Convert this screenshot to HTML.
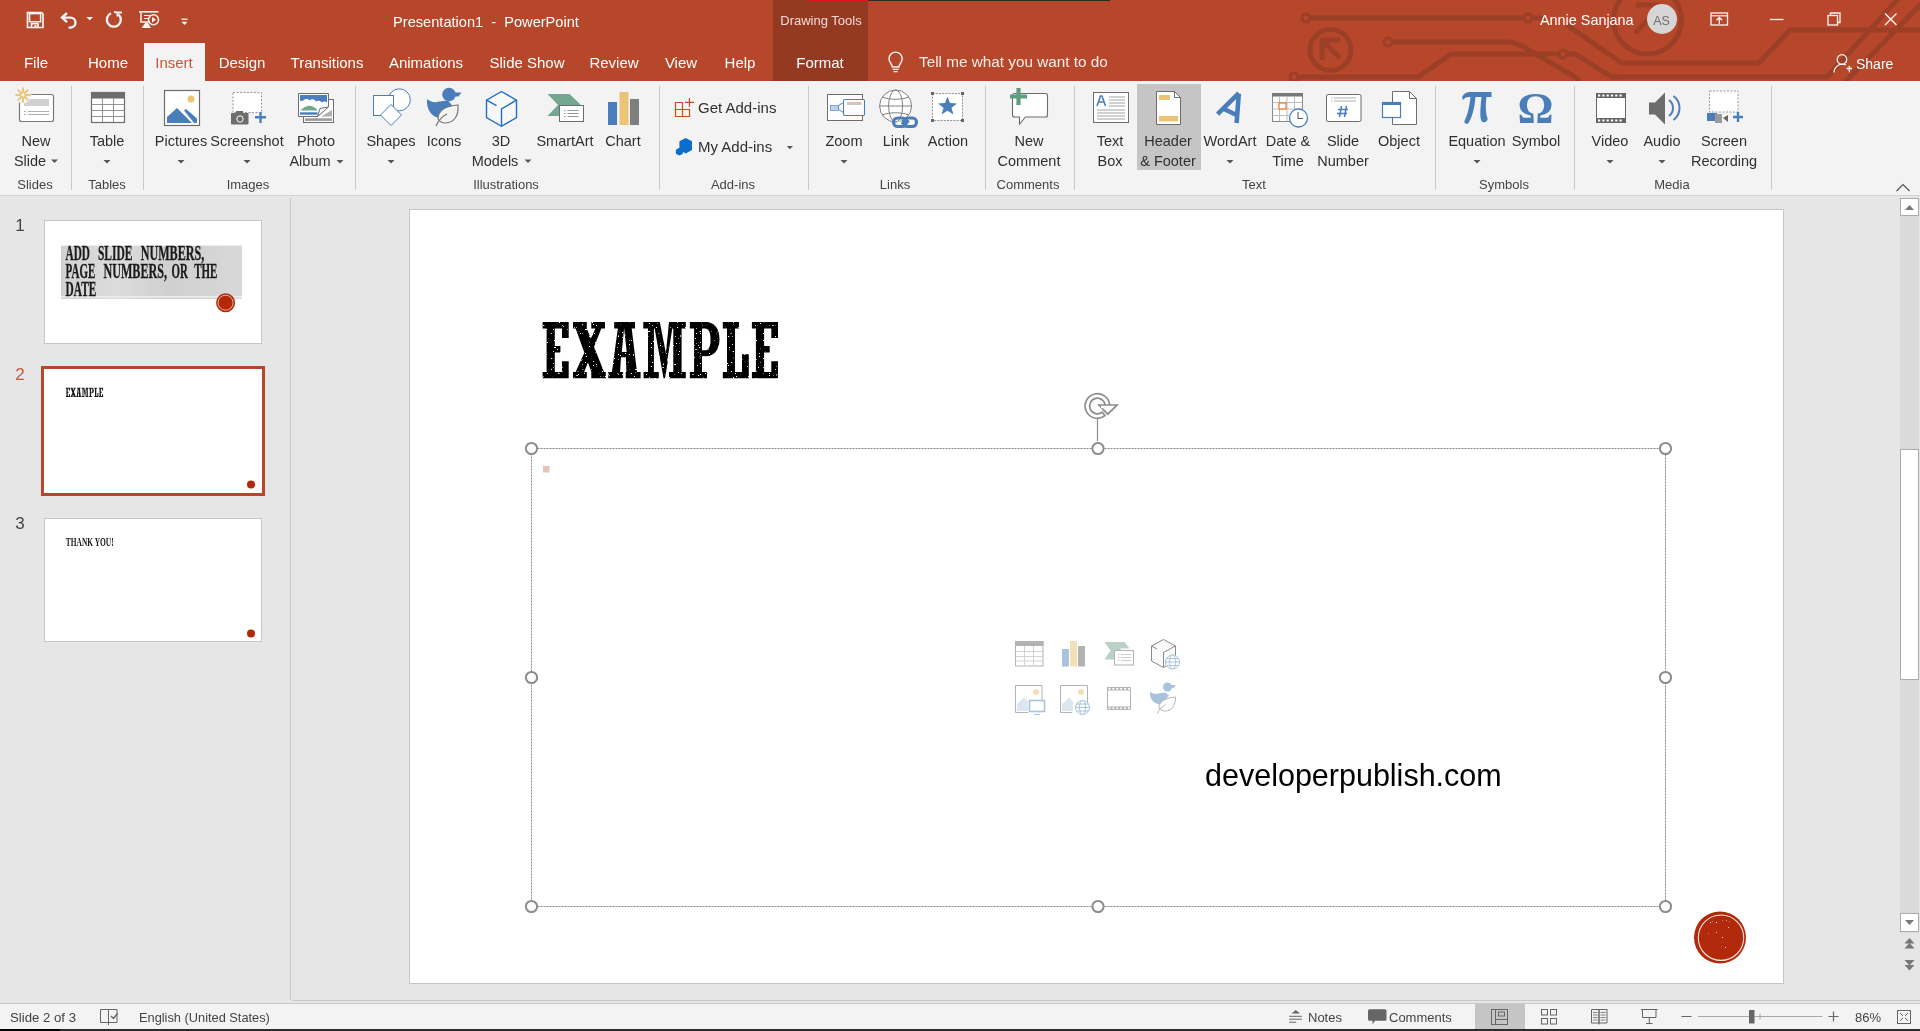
<!DOCTYPE html><html><head><meta charset="utf-8"><style>
*{margin:0;padding:0;box-sizing:border-box}
html,body{width:1920px;height:1031px;overflow:hidden;background:#E6E6E6;font-family:"Liberation Sans",sans-serif;position:relative}
.a{position:absolute;white-space:nowrap}
.c{position:absolute;white-space:nowrap;text-align:center;width:200px}
.tab{color:#fff;font-size:15px;line-height:18px}
.lbl{font-size:14.5px;color:#303030;line-height:20px}
.glbl{font-size:13px;color:#444;line-height:16px}
.st{font-size:13px;color:#444;line-height:16px}
svg{position:absolute;left:0;top:0}
</style></head><body><div style="position:absolute;left:0;top:0;width:1920px;height:1031px;overflow:hidden;will-change:transform">
<div class="a" style="left:0;top:0;width:1920px;height:81px;background:#B7472A"></div>
<svg width="1920" height="81" style="left:0;top:0"><g fill="none" stroke="#9C3F27" stroke-width="5" stroke-linejoin="round">
<path d="M1311 18H1523M1533 18H1545"/>
<circle cx="1306" cy="18" r="4" stroke-width="3.2"/><circle cx="1528" cy="18" r="4" stroke-width="3.2"/>
<circle cx="1330.5" cy="50" r="20.5"/>
<path d="M1322 60v-20h18M1322 40l18 18" stroke-width="5"/>
<path d="M1393 42H1511L1522 46L1575 77L1580 81"/>
<circle cx="1388" cy="42" r="4" stroke-width="3.2"/>
<path d="M1299 77H1418L1451 54H1558M1568 54H1575L1582 58L1605 73L1612 77L1620 77"/>
<circle cx="1294" cy="77" r="4" stroke-width="3.2"/><circle cx="1563" cy="54" r="4" stroke-width="3.2"/>
<path d="M1567 25L1600 48L1622 63H1759L1790 30H1920"/>
<path d="M1612 77H1827L1899 -2"/>
<path d="M1845 82L1922 3"/>
<circle cx="1647.5" cy="20" r="34"/>
<path d="M1635 33L1655 13M1636 5H1658V25"/>
</g></svg>
<div class="a" style="left:773px;top:0;width:95px;height:81px;background:#953A22"></div>
<div class="a" style="left:809px;top:0;width:59px;height:1px;background:#E81123"></div>
<div class="a" style="left:868px;top:0;width:242px;height:1px;background:#2B2B2B"></div>
<div class="a" style="left:144px;top:43px;width:61px;height:38px;background:#F3F3F3"></div>
<div class="a" style="left:0;top:81px;width:1920px;height:114px;background:#F3F3F3"></div>
<div class="a" style="left:0;top:195px;width:1920px;height:1px;background:#D4D4D4"></div>
<div class="a" style="left:1137px;top:84px;width:64px;height:86px;background:#C5C5C5"></div>
<div class="c tab" style="left:386px;top:13px;font-size:14.6px">Presentation1&nbsp; - &nbsp;PowerPoint</div>
<div class="c tab" style="left:721px;top:12px;font-size:13px;color:#F2D9D2">Drawing Tools</div>
<div class="a tab" style="left:1540px;top:11px;font-size:14.4px">Annie Sanjana</div>
<div class="a tab" style="left:919px;top:53px;font-size:15.3px;color:#F8EEEA">Tell me what you want to do</div>
<div class="a tab" style="left:1856px;top:55px;font-size:14px">Share</div>
<div class="c tab" style="left:-64px;top:54px;color:#fff">File</div>
<div class="c tab" style="left:8px;top:54px;color:#fff">Home</div>
<div class="c tab" style="left:74px;top:54px;color:#C8553A">Insert</div>
<div class="c tab" style="left:142px;top:54px;color:#fff">Design</div>
<div class="c tab" style="left:227px;top:54px;color:#fff">Transitions</div>
<div class="c tab" style="left:326px;top:54px;color:#fff">Animations</div>
<div class="c tab" style="left:427px;top:54px;color:#fff">Slide Show</div>
<div class="c tab" style="left:514px;top:54px;color:#fff">Review</div>
<div class="c tab" style="left:581px;top:54px;color:#fff">View</div>
<div class="c tab" style="left:640px;top:54px;color:#fff">Help</div>
<div class="c tab" style="left:720px;top:54px;color:#fff">Format</div>
<div class="c lbl" style="left:-64px;top:131px;">New</div>
<div class="c lbl" style="left:-70px;top:151px;">Slide</div>
<div class="c lbl" style="left:7px;top:131px;">Table</div>
<div class="c lbl" style="left:81px;top:131px;">Pictures</div>
<div class="c lbl" style="left:147px;top:131px;">Screenshot</div>
<div class="c lbl" style="left:216px;top:131px;">Photo</div>
<div class="c lbl" style="left:210px;top:151px;">Album</div>
<div class="c lbl" style="left:291px;top:131px;">Shapes</div>
<div class="c lbl" style="left:344px;top:131px;">Icons</div>
<div class="c lbl" style="left:401px;top:131px;">3D</div>
<div class="c lbl" style="left:395px;top:151px;">Models</div>
<div class="c lbl" style="left:465px;top:131px;">SmartArt</div>
<div class="c lbl" style="left:523px;top:131px;">Chart</div>
<div class="c lbl" style="left:744px;top:131px;">Zoom</div>
<div class="c lbl" style="left:796px;top:131px;">Link</div>
<div class="c lbl" style="left:848px;top:131px;">Action</div>
<div class="c lbl" style="left:929px;top:131px;">New</div>
<div class="c lbl" style="left:929px;top:151px;">Comment</div>
<div class="c lbl" style="left:1010px;top:131px;">Text</div>
<div class="c lbl" style="left:1010px;top:151px;">Box</div>
<div class="c lbl" style="left:1068px;top:131px;">Header</div>
<div class="c lbl" style="left:1068px;top:151px;">&amp; Footer</div>
<div class="c lbl" style="left:1130px;top:131px;">WordArt</div>
<div class="c lbl" style="left:1188px;top:131px;">Date &amp;</div>
<div class="c lbl" style="left:1188px;top:151px;">Time</div>
<div class="c lbl" style="left:1243px;top:131px;">Slide</div>
<div class="c lbl" style="left:1243px;top:151px;">Number</div>
<div class="c lbl" style="left:1299px;top:131px;">Object</div>
<div class="c lbl" style="left:1377px;top:131px;">Equation</div>
<div class="c lbl" style="left:1436px;top:131px;">Symbol</div>
<div class="c lbl" style="left:1510px;top:131px;">Video</div>
<div class="c lbl" style="left:1562px;top:131px;">Audio</div>
<div class="c lbl" style="left:1624px;top:131px;">Screen</div>
<div class="c lbl" style="left:1624px;top:151px;">Recording</div>
<div class="a lbl" style="left:698px;top:98px;font-size:15px">Get Add-ins</div>
<div class="a lbl" style="left:698px;top:137px;font-size:15px">My Add-ins</div>
<div class="c glbl" style="left:-65px;top:177px;">Slides</div>
<div class="c glbl" style="left:7px;top:177px;">Tables</div>
<div class="c glbl" style="left:148px;top:177px;">Images</div>
<div class="c glbl" style="left:406px;top:177px;">Illustrations</div>
<div class="c glbl" style="left:633px;top:177px;">Add-ins</div>
<div class="c glbl" style="left:795px;top:177px;">Links</div>
<div class="c glbl" style="left:928px;top:177px;">Comments</div>
<div class="c glbl" style="left:1154px;top:177px;">Text</div>
<div class="c glbl" style="left:1404px;top:177px;">Symbols</div>
<div class="c glbl" style="left:1572px;top:177px;">Media</div>
<div class="a" style="left:71px;top:86px;width:1px;height:104px;background:#C8C8C8"></div>
<div class="a" style="left:143px;top:86px;width:1px;height:104px;background:#C8C8C8"></div>
<div class="a" style="left:355px;top:86px;width:1px;height:104px;background:#C8C8C8"></div>
<div class="a" style="left:659px;top:86px;width:1px;height:104px;background:#C8C8C8"></div>
<div class="a" style="left:808px;top:86px;width:1px;height:104px;background:#C8C8C8"></div>
<div class="a" style="left:985px;top:86px;width:1px;height:104px;background:#C8C8C8"></div>
<div class="a" style="left:1074px;top:86px;width:1px;height:104px;background:#C8C8C8"></div>
<div class="a" style="left:1435px;top:86px;width:1px;height:104px;background:#C8C8C8"></div>
<div class="a" style="left:1574px;top:86px;width:1px;height:104px;background:#C8C8C8"></div>
<div class="a" style="left:1771px;top:86px;width:1px;height:104px;background:#C8C8C8"></div>
<div class="a" style="left:290px;top:198px;width:1px;height:802px;background:#C8C8C8"></div>
<div class="a" style="left:292px;top:1000px;width:1628px;height:1px;background:#C8C8C8"></div>
<div class="a" style="left:409px;top:209px;width:1375px;height:775px;background:#fff;border:1px solid #C6C6C6"></div>
<div class="a" style="left:44px;top:220px;width:218px;height:124px;background:#fff;border:1px solid #C6C6C6"></div>
<div class="a" style="left:41px;top:366px;width:224px;height:130px;background:#fff;border:3px solid #B7472A"></div>
<div class="a" style="left:44px;top:518px;width:218px;height:124px;background:#fff;border:1px solid #C6C6C6"></div>
<div class="c tab" style="left:-80px;top:217px;color:#444;font-size:17px">1</div>
<div class="c tab" style="left:-80px;top:366px;color:#C8553A;font-size:17px">2</div>
<div class="c tab" style="left:-80px;top:515px;color:#444;font-size:17px">3</div>
<div class="a" style="left:1900px;top:198px;width:19px;height:735px;background:#DADADA"></div>
<div class="a" style="left:1900px;top:198px;width:19px;height:18px;background:#fff;border:1px solid #ABABAB"></div>
<div class="a" style="left:1900px;top:449px;width:19px;height:231px;background:#fff;border:1px solid #ABABAB"></div>
<div class="a" style="left:1900px;top:913px;width:19px;height:19px;background:#fff;border:1px solid #ABABAB"></div>
<div class="a" style="left:0;top:1003px;width:1920px;height:1px;background:#C8C8C8"></div>
<div class="a" style="left:0;top:1004px;width:1920px;height:25px;background:#F3F3F3"></div>
<div class="a" style="left:0;top:1029px;width:1920px;height:2px;background:#2B2B2B"></div>
<div class="a" style="left:0;top:1029px;width:60px;height:2px;background:#000"></div>
<div class="a" style="left:1475px;top:1004px;width:50px;height:25px;background:#C5C5C5"></div>
<div class="a st" style="left:10px;top:1010px;font-size:13.2px">Slide 2 of 3</div>
<div class="a st" style="left:139px;top:1010px;font-size:12.8px">English (United States)</div>
<div class="a st" style="left:1308px;top:1010px;">Notes</div>
<div class="a st" style="left:1389px;top:1010px;">Comments</div>
<div class="a st" style="left:1855px;top:1010px;">86%</div>
<svg width="1920" height="1031" style="left:0;top:0"><defs><filter id="dst" x="530" y="310" width="260" height="80" filterUnits="userSpaceOnUse"><feTurbulence type="fractalNoise" baseFrequency="0.55" numOctaves="2" seed="11" result="n"/><feColorMatrix in="n" type="matrix" values="0 0 0 0 0  0 0 0 0 0  0 0 0 0 0  -15 0 0 0 11.5" result="m"/><feComposite in="SourceGraphic" in2="m" operator="in"/></filter></defs>
<g fill="#050505" filter="url(#dst)"><path d="M542.6 321.9H568.7V338.1H562V328.5H554.8V346H560.4V352.6H554.8V372H562V361.2H568.7V378.3H542.6V372H546.6V328.5H542.6Z"/><path d="M573 321.9H586.8V328.5H573ZM591.3 321.9H605V328.5H591.3ZM573 372H586.8V378.3H573ZM591.3 372H605.8V378.3H591.3ZM575.6 328.5L586.8 328.5L604 372L591.4 372ZM595.4 328.5L601.3 328.5L584.2 372L575.6 372Z"/><path fill-rule="evenodd" d="M614.2 321.9H635V328.5H631.7L637 372H640.6V378.3H625.7V372H626.4L625.9 357.2H621L620.1 372H623.1V378.3H608.3V372H611.9L617.8 328.5H614.2ZM624.1 328L626.7 352H621.8Z"/><path d="M643.3 321.9H659.5V328.5H643.3ZM669 321.9H685.8V328.5H669ZM643.6 372H658.8V378.3H643.6ZM669 372H685.8V378.3H669ZM648 321.9H653.9V378.3H648ZM673.3 321.9H681.6V378.3H673.3ZM653.5 321.9L659.8 321.9L667.7 362.2L665 378.3L663.5 378.3ZM669 321.9L673.3 321.9L667 362.2L665 378.3L664 372Z"/><path d="M689.8 321.9H706C714 321.9 719.5 328 719.5 339C719.5 350 714 356.2 706 356.2H702V372H707V378.3H689.8V372H694.1V328.5H689.8Z"/><path d="M702 328.5H705C708.5 328.5 710.5 332 710.5 339.4C710.5 347 708.5 350.3 705 350.3H702Z" fill="#fff"/><path d="M722.8 321.9H739V328.5H735V372H742V354.3H748.8V378.3H722.8V372H727V328.5H722.8Z"/><path transform="translate(209.3 0)" d="M542.6 321.9H568.7V338.1H562V328.5H554.8V346H560.4V352.6H554.8V372H562V361.2H568.7V378.3H542.6V372H546.6V328.5H542.6Z"/></g>
<g fill="#1A1A1A" transform="translate(-20.140 335.862) scale(0.15839 0.16135)"><path d="M542.6 321.9H568.7V338.1H562V328.5H554.8V346H560.4V352.6H554.8V372H562V361.2H568.7V378.3H542.6V372H546.6V328.5H542.6Z"/><path d="M573 321.9H586.8V328.5H573ZM591.3 321.9H605V328.5H591.3ZM573 372H586.8V378.3H573ZM591.3 372H605.8V378.3H591.3ZM575.6 328.5L586.8 328.5L604 372L591.4 372ZM595.4 328.5L601.3 328.5L584.2 372L575.6 372Z"/><path fill-rule="evenodd" d="M614.2 321.9H635V328.5H631.7L637 372H640.6V378.3H625.7V372H626.4L625.9 357.2H621L620.1 372H623.1V378.3H608.3V372H611.9L617.8 328.5H614.2ZM624.1 328L626.7 352H621.8Z"/><path d="M643.3 321.9H659.5V328.5H643.3ZM669 321.9H685.8V328.5H669ZM643.6 372H658.8V378.3H643.6ZM669 372H685.8V378.3H669ZM648 321.9H653.9V378.3H648ZM673.3 321.9H681.6V378.3H673.3ZM653.5 321.9L659.8 321.9L667.7 362.2L665 378.3L663.5 378.3ZM669 321.9L673.3 321.9L667 362.2L665 378.3L664 372Z"/><path d="M689.8 321.9H706C714 321.9 719.5 328 719.5 339C719.5 350 714 356.2 706 356.2H702V372H707V378.3H689.8V372H694.1V328.5H689.8Z"/><path d="M702 328.5H705C708.5 328.5 710.5 332 710.5 339.4C710.5 347 708.5 350.3 705 350.3H702Z" fill="#fff"/><path d="M722.8 321.9H739V328.5H735V372H742V354.3H748.8V378.3H722.8V372H727V328.5H722.8Z"/><path transform="translate(209.3 0)" d="M542.6 321.9H568.7V338.1H562V328.5H554.8V346H560.4V352.6H554.8V372H562V361.2H568.7V378.3H542.6V372H546.6V328.5H542.6Z"/></g>
<rect x="531.5" y="448.5" width="1134" height="458" fill="none" stroke="#878787" stroke-width="1" stroke-dasharray="2 1"/>
<path d="M1097.5 418v23" stroke="#8C8C8C" stroke-width="1.2"/>
<circle cx="531.5" cy="448.5" r="5.6" fill="#fff" stroke="#8C8C8C" stroke-width="2"/>
<circle cx="1098" cy="448.5" r="5.6" fill="#fff" stroke="#8C8C8C" stroke-width="2"/>
<circle cx="1665.5" cy="448.5" r="5.6" fill="#fff" stroke="#8C8C8C" stroke-width="2"/>
<circle cx="531.5" cy="677.5" r="5.6" fill="#fff" stroke="#8C8C8C" stroke-width="2"/>
<circle cx="1665.5" cy="677.5" r="5.6" fill="#fff" stroke="#8C8C8C" stroke-width="2"/>
<circle cx="531.5" cy="906.5" r="5.6" fill="#fff" stroke="#8C8C8C" stroke-width="2"/>
<circle cx="1098" cy="906.5" r="5.6" fill="#fff" stroke="#8C8C8C" stroke-width="2"/>
<circle cx="1665.5" cy="906.5" r="5.6" fill="#fff" stroke="#8C8C8C" stroke-width="2"/>
<path d="M1109.70 406.00A12.3 12.3 0 1 0 1104.97 415.69L1102.20 412.15A7.8 7.8 0 1 1 1105.20 406.00Z" fill="#fff" stroke="#8C8C8C" stroke-width="1.7"/>
<path d="M1099 405h18l-9.3 9.2z" fill="#fff" stroke="#8C8C8C" stroke-width="1.7" stroke-linejoin="miter"/>
<rect x="1101" y="406" width="6" height="2.2" fill="#fff"/>
<rect x="543" y="466" width="6.5" height="6.5" fill="#E8C3B8"/>
<defs><filter id="spk" filterUnits="userSpaceOnUse" x="1690" y="908" width="62" height="62"><feTurbulence type="fractalNoise" baseFrequency="0.8" numOctaves="2" seed="5" result="n"/><feColorMatrix in="n" type="matrix" values="0 0 0 0 1  0 0 0 0 1  0 0 0 0 1  18 0 0 0 -13.8" result="w"/><feComposite in="w" in2="SourceAlpha" operator="in" result="wm"/><feMerge><feMergeNode in="SourceGraphic"/><feMergeNode in="wm"/></feMerge></filter><linearGradient id="cg" x1="0" x2="1"><stop offset="0" stop-color="#B2290A" stop-opacity="0"/><stop offset="1" stop-color="#B2290A" stop-opacity="1"/></linearGradient></defs>
<circle cx="1720" cy="937.5" r="26" fill="#B2290A"/>
<circle cx="1722" cy="937.5" r="21" fill="#B2290A" filter="url(#spk)" opacity="0.9"/>
<circle cx="1721" cy="937.7" r="22.7" fill="none" stroke="#F7E6E0" stroke-width="1.1"/>
<circle cx="251" cy="484.5" r="4" fill="#B2290A"/>
<circle cx="251" cy="633.5" r="4" fill="#B2290A"/>
<rect x="1015.5" y="641.5" width="27.5" height="24.5" fill="#fff" stroke="#B3B3B3" stroke-width="1"/><rect x="1015" y="641" width="28.5" height="5" fill="#B3B3B3"/>
<path d="M1024.5 646v20M1033.5 646v20M1015.5 651.5h27.5M1015.5 656.5h27.5M1015.5 661h27.5" stroke="#CFCFCF" stroke-width="0.9"/>
<rect x="1062" y="649" width="7" height="17.5" fill="#A9C2DE"/><rect x="1070" y="641" width="7" height="25.5" fill="#F3E0B6"/><rect x="1078" y="646" width="7" height="20.5" fill="#B3B3B3"/>
<rect x="1062" y="655" width="0" height="0"/>
<path d="M1104.5 642h20l5 6.5h-9v11h-16l6-9z" fill="#BBD1C6"/>
<rect x="1114.5" y="650.5" width="19" height="14.5" fill="#fff" stroke="#B3B3B3" stroke-width="1"/>
<path d="M1118 654.5h1.5M1121 654.5h10M1118 657.5h1.5M1121 657.5h10M1118 660.5h1.5M1121 660.5h10" stroke="#C8C8C8" stroke-width="0.9"/>
<path d="M1163.5 639.5l12 6.5v15l-12 6.5-12-6.5v-15z" fill="#FAFAFA" stroke="#8A8A8A" stroke-width="1"/>
<path d="M1151.5 646l5.5 3M1175.5 646l-12 6.5v15" fill="none" stroke="#8A8A8A" stroke-width="1"/>
<g fill="#fff" stroke="#A9C2DE" stroke-width="1"><circle cx="1172.5" cy="662" r="7"/><ellipse cx="1172.5" cy="662" rx="3" ry="7"/><path d="M1165.5 662h14M1166.5 658.5h12M1166.5 665.5h12"/></g>
<path d="M1042 705.5V685.5H1015.5V712.5H1028" fill="none" stroke="#B3B3B3" stroke-width="1"/>
<circle cx="1036" cy="692" r="3" fill="#F3E0B6"/><path d="M1017 711v-7l7-6.5 4 4v9.5z" fill="#DCE6F1"/>
<rect x="1029.5" y="700.5" width="15" height="11" fill="#fff" stroke="#A9C2DE" stroke-width="1.6"/><path d="M1034 714.5h6" stroke="#A9C2DE" stroke-width="1"/>
<path d="M1087.5 707V685.5H1060.5V712.5H1072" fill="none" stroke="#B3B3B3" stroke-width="1"/>
<circle cx="1081" cy="692" r="3" fill="#F3E0B6"/><path d="M1062 711v-7l7-6.5 4 4v9.5z" fill="#DCE6F1"/>
<g fill="#fff" stroke="#A9C2DE" stroke-width="1"><circle cx="1082.5" cy="707.5" r="7"/><ellipse cx="1082.5" cy="707.5" rx="3" ry="7"/><path d="M1075.5 707.5h14M1076.5 704h12M1076.5 711h12"/></g>
<rect x="1107.5" y="687.5" width="23" height="22" fill="#fff" stroke="#B3B3B3" stroke-width="1"/>
<rect x="1107" y="687" width="24" height="3.5" fill="#B3B3B3"/><rect x="1107" y="706.5" width="24" height="3.5" fill="#B3B3B3"/>
<g fill="#fff"><rect x="1108.5" y="688" width="2" height="1.6"/><rect x="1108.5" y="707.5" width="2" height="1.6"/><rect x="1112.4" y="688" width="2" height="1.6"/><rect x="1112.4" y="707.5" width="2" height="1.6"/><rect x="1116.3" y="688" width="2" height="1.6"/><rect x="1116.3" y="707.5" width="2" height="1.6"/><rect x="1120.2" y="688" width="2" height="1.6"/><rect x="1120.2" y="707.5" width="2" height="1.6"/><rect x="1124.1" y="688" width="2" height="1.6"/><rect x="1124.1" y="707.5" width="2" height="1.6"/><rect x="1128.0" y="688" width="2" height="1.6"/><rect x="1128.0" y="707.5" width="2" height="1.6"/></g>
<circle cx="1167.5" cy="687" r="4.5" fill="#A9C2DE"/><path d="M1171 685h5l-2.5 3h-3z" fill="#A9C2DE"/>
<path d="M1150 691.5c2 2 5 3 8 2l7-1 4 3-8 9c-6 0-12-5-11-13z" fill="#A9C2DE"/>
<path d="M1157.5 713.5c2-5 5-7 8-9M1159 708c0-6 5-10 16.5-11c0 9-4 14-10 14c-2.5 0-4.5-1-6.5-3z" fill="#fff" stroke="#B3B3B3" stroke-width="1"/><defs><linearGradient id="bandg" x1="0" x2="1" y1="0" y2="0"><stop offset="0" stop-color="#D2D2D2"/><stop offset="0.3" stop-color="#DCDCDC"/><stop offset="0.6" stop-color="#D0D0D0"/><stop offset="1" stop-color="#D8D8D8"/></linearGradient></defs>
<rect x="61" y="245" width="181" height="54" fill="url(#bandg)"/>
<rect x="61" y="245" width="181" height="1" fill="#EFEFEF"/><rect x="61" y="296" width="181" height="1.5" fill="#EDEDED"/>
<text x="65.6" y="259.5" font-size="20px" textLength="24.4" font-family="Liberation Serif" font-weight="bold" lengthAdjust="spacingAndGlyphs" fill="#1A1A1A" stroke="#1A1A1A" stroke-width="0.3">ADD</text>
<text x="97.9" y="259.5" font-size="20px" textLength="34.5" font-family="Liberation Serif" font-weight="bold" lengthAdjust="spacingAndGlyphs" fill="#1A1A1A" stroke="#1A1A1A" stroke-width="0.3">SLIDE</text>
<text x="140.7" y="259.5" font-size="20px" textLength="63.6" font-family="Liberation Serif" font-weight="bold" lengthAdjust="spacingAndGlyphs" fill="#1A1A1A" stroke="#1A1A1A" stroke-width="0.3">NUMBERS,</text>
<text x="65.6" y="277.8" font-size="20px" textLength="29.7" font-family="Liberation Serif" font-weight="bold" lengthAdjust="spacingAndGlyphs" fill="#1A1A1A" stroke="#1A1A1A" stroke-width="0.3">PAGE</text>
<text x="103.4" y="277.8" font-size="20px" textLength="63.6" font-family="Liberation Serif" font-weight="bold" lengthAdjust="spacingAndGlyphs" fill="#1A1A1A" stroke="#1A1A1A" stroke-width="0.3">NUMBERS,</text>
<text x="171.5" y="277.8" font-size="20px" textLength="16.4" font-family="Liberation Serif" font-weight="bold" lengthAdjust="spacingAndGlyphs" fill="#1A1A1A" stroke="#1A1A1A" stroke-width="0.3">OR</text>
<text x="194.2" y="277.8" font-size="20px" textLength="23.2" font-family="Liberation Serif" font-weight="bold" lengthAdjust="spacingAndGlyphs" fill="#1A1A1A" stroke="#1A1A1A" stroke-width="0.3">THE</text>
<text x="65.6" y="295.5" font-size="20px" textLength="30.7" font-family="Liberation Serif" font-weight="bold" lengthAdjust="spacingAndGlyphs" fill="#1A1A1A" stroke="#1A1A1A" stroke-width="0.3">DATE</text>
<circle cx="225.6" cy="302.7" r="9.5" fill="#B2290A"/><circle cx="225.6" cy="302.7" r="7.5" fill="none" stroke="#F2D5CC" stroke-width="0.8"/>
<text x="65.8" y="546" font-size="13.5px" textLength="47.9" font-family="Liberation Serif" font-weight="bold" lengthAdjust="spacingAndGlyphs" fill="#1A1A1A">THANK YOU!</text>
<path d="M1905 210h9l-4.5-5z" fill="#777"/>
<path d="M1905 920h9l-4.5 5z" fill="#777"/>
<path d="M1904.5 943.5h10l-5-5.5zM1904.5 948.5h10l-5-5.5z" fill="#777"/>
<path d="M1904.5 960h10l-5 5.5zM1904.5 965h10l-5 5.5z" fill="#777"/>
<path d="M100.5 1009.5h8v13h-8zM108.5 1009.5h8.5v13h-8.5M108.5 1009.5v15.5" fill="none" stroke="#666" stroke-width="1"/>
<path d="M111 1016l2.5 2.5 4-5" fill="none" stroke="#666" stroke-width="1.5"/>
<path d="M1291.5 1013.5h8.5l-4.25-3.5z" fill="#666"/>
<path d="M1289.2 1016.3h12.7M1289.2 1019.2h12.7M1289.2 1022.2h7" stroke="#666" stroke-width="1"/>
<path d="M1369.5 1009.3h15.5a1.5 1.5 0 0 1 1.5 1.5v8.5a1.5 1.5 0 0 1-1.5 1.5h-10l-2.5 3.5v-3.5h-3a1.5 1.5 0 0 1-1.5-1.5v-8.5a1.5 1.5 0 0 1 1.5-1.5z" fill="#666"/>
<g fill="none" stroke="#666" stroke-width="1"><rect x="1491.5" y="1009.5" width="16" height="15"/><path d="M1495.5 1009.5v15M1495.5 1019.5h12"/><rect x="1498.5" y="1012" width="6" height="4"/></g>
<g fill="none" stroke="#666" stroke-width="1"><rect x="1541.5" y="1009.5" width="6" height="5.5"/><rect x="1550.5" y="1009.5" width="6" height="5.5"/><rect x="1541.5" y="1018.5" width="6" height="5.5"/><rect x="1550.5" y="1018.5" width="6" height="5.5"/></g>
<g fill="none" stroke="#666" stroke-width="1"><path d="M1591.5 1009.5h7.5v13.5h-7.5zM1599 1009.5h8v13.5h-8M1599 1009.5v15"/><path d="M1593 1012.5h4.5M1593 1015h4.5M1593 1017.5h4.5M1593 1020h4.5M1600.5 1012.5h5M1600.5 1015h5M1600.5 1017.5h5M1600.5 1020h5" stroke-width="0.8"/></g>
<g fill="none" stroke="#666" stroke-width="1"><path d="M1641 1009.5h16.5M1642.5 1010v7.5h13.5v-7.5M1649.3 1017.5v6M1646 1023.5h6.5"/></g>
<path d="M1681.5 1016.5h10M1828.5 1016.5h10M1833.5 1011.5v10" stroke="#666" stroke-width="1.2"/>
<path d="M1698 1016.5h124.5" stroke="#A8A8A8" stroke-width="1"/>
<path d="M1760 1013.5v6" stroke="#A8A8A8" stroke-width="1"/>
<rect x="1749" y="1010" width="5.5" height="13.5" fill="#666"/>
<g fill="none" stroke="#666" stroke-width="1"><rect x="1897.5" y="1010.5" width="13" height="13"/><path d="M1900 1013l3 3M1908 1013l-3 3M1900 1021l3-3M1908 1021l-3-3"/></g></svg>
<div class="a a" style="left:1205px;top:758px;font-size:30.5px;color:#000">developerpublish.com</div>
<svg width="1920" height="1031" style="left:0;top:0"><path d="M27.5 12.5h14l1.5 1.5v13.5h-15.5z" fill="none" stroke="#F4F4F4" stroke-width="1.7"/>
<rect x="29.6" y="13.6" width="11" height="8.2" fill="none" stroke="#F4F4F4" stroke-width="1.5"/>
<path d="M31.5 28v-4.3h6.5v4.3" fill="none" stroke="#F4F4F4" stroke-width="1.6"/>
<rect x="34.5" y="25" width="2" height="3" fill="#F4F4F4"/>
<path d="M62.5 17.6h8a5 5 0 0 1 0 10h-2" fill="none" stroke="#F4F4F4" stroke-width="2.4"/>
<path d="M67 13l-5 4.6 5 4.6" fill="none" stroke="#F4F4F4" stroke-width="2.4"/>
<path d="M86.5 17h6.5l-3.25 3.5z" fill="#F4F4F4"/>
<path d="M118.5 14.5a7 7 0 1 1 -7.5 -1.2" fill="none" stroke="#F4F4F4" stroke-width="2.3"/>
<path d="M114 12l3.5 0.5 0 4 M117 12.5h5" fill="none" stroke="#F4F4F4" stroke-width="2"/>
<path d="M139 11.8h19.5" stroke="#F4F4F4" stroke-width="1.6"/>
<path d="M141 12.5v9.5h9" fill="none" stroke="#F4F4F4" stroke-width="1.5"/>
<path d="M144 15.5h6M144 18.5h4" stroke="#F4F4F4" stroke-width="1.2"/>
<circle cx="153.5" cy="19.8" r="5" fill="none" stroke="#F4F4F4" stroke-width="1.5"/>
<path d="M152 17v5.5l4-2.75z" fill="#F4F4F4"/>
<path d="M145.5 22.5l-4 5.5h9.5l-3-5" fill="#F4F4F4"/>
<path d="M181.5 19.2h6" stroke="#F4F4F4" stroke-width="1.3"/>
<path d="M181.5 21.8h6l-3 3.2z" fill="#F4F4F4"/>
<path d="M892.3 67c0-3-3.3-4.3-3.3-8.3a6.6 6.6 0 0 1 13.2 0c0 4-3.3 5.3-3.3 8.3z" fill="none" stroke="#F4F4F4" stroke-width="1.4"/>
<path d="M892.6 69.3h6M893.6 71.6h4" stroke="#F4F4F4" stroke-width="1.3"/>
<rect x="1711" y="13" width="16.5" height="12" fill="none" stroke="#F4F4F4" stroke-width="1.3"/>
<path d="M1711 15.8h16.5" stroke="#F4F4F4" stroke-width="1.2"/>
<path d="M1719.3 24v-6.5M1716.5 20.3l2.8-2.8 2.8 2.8" fill="none" stroke="#F4F4F4" stroke-width="1.3"/>
<path d="M1770 19.5h13.5" stroke="#F4F4F4" stroke-width="1.3"/>
<rect x="1828" y="15.5" width="9.5" height="9.5" fill="none" stroke="#F4F4F4" stroke-width="1.3"/>
<path d="M1830.5 15.5v-2.5h9.5v9.5h-2.5" fill="none" stroke="#F4F4F4" stroke-width="1.3"/>
<path d="M1885 13.5l11.5 11.5M1896.5 13.5l-11.5 11.5" stroke="#F4F4F4" stroke-width="1.4"/>
<circle cx="1662" cy="19" r="15" fill="#D6D6D6"/>
<circle cx="1842" cy="59.5" r="4.8" fill="none" stroke="#F4F4F4" stroke-width="1.3"/>
<path d="M1834 72.5a8.5 8.5 0 0 1 12-7.5" fill="none" stroke="#F4F4F4" stroke-width="1.3"/>
<path d="M1846.5 68.5h5.5M1849.3 65.8v6.5" stroke="#F4F4F4" stroke-width="1.3"/><rect x="19.5" y="94.5" width="34" height="27" rx="2" fill="#fff" stroke="#7A7A7A" stroke-width="1.2"/>
<rect x="24" y="99" width="25" height="7" fill="#D0D0D0"/>
<path d="M24 111.5h2M28 111.5h21M24 114.5h2M28 114.5h21" stroke="#A6A6A6" stroke-width="0.9"/>
<circle cx="23" cy="95" r="8.4" fill="#F3F3F3"/>
<g stroke="#EBC477" stroke-width="1.9" fill="none" stroke-linecap="round"><path d="M26.30 95.00L29.80 95.00M25.33 97.33L27.81 99.81M23.00 98.30L23.00 101.80M20.67 97.33L18.19 99.81M19.70 95.00L16.20 95.00M20.67 92.67L18.19 90.19M23.00 91.70L23.00 88.20M25.33 92.67L27.81 90.19"/><circle cx="23" cy="95" r="2.6"/></g>
<path d="M51.0 159.5h7l-3.5 3.5z" fill="#555"/>
<rect x="91.5" y="92.5" width="33" height="30" fill="#fff" stroke="#6D6D6D" stroke-width="1.2"/>
<rect x="91" y="92" width="34" height="6.5" fill="#6D6D6D"/>
<path d="M102.5 98v24M113.5 98v24M91.5 104.5h33M91.5 110.5h33M91.5 116.5h33" stroke="#8A8A8A" stroke-width="0.9"/>
<path d="M103.5 160h7l-3.5 3.5z" fill="#555"/>
<rect x="164.5" y="90.5" width="35" height="35" fill="#fff" stroke="#6D6D6D" stroke-width="1.2"/>
<circle cx="191" cy="99" r="3.5" fill="#EBC477"/>
<path d="M167 123v-6l10-9 15 15z" fill="#4A7EBB"/>
<path d="M184 110.5l2-1.5 11 9.5v4.5h-3z" fill="#4A7EBB"/>
<path d="M177.5 160h7l-3.5 3.5z" fill="#555"/>
<rect x="233" y="92.5" width="28.5" height="20" fill="#fff" stroke="#999" stroke-width="1" stroke-dasharray="2 1.5"/>
<rect x="231" y="113" width="17.5" height="11.5" rx="0.8" fill="#6D6D6D"/><rect x="236" y="111" width="7" height="3" fill="#6D6D6D"/>
<circle cx="240" cy="119" r="3.2" fill="none" stroke="#fff" stroke-width="1"/>
<path d="M255 117.3h11M260.5 112v11" stroke="#4A7EBB" stroke-width="2.4"/>
<path d="M243.5 160h7l-3.5 3.5z" fill="#555"/>
<rect x="303.5" y="99.5" width="30" height="23" fill="#fff" stroke="#6D6D6D" stroke-width="1"/>
<rect x="305" y="118.3" width="27" height="2.6" fill="#9A9A9A"/>
<path d="M321 116.5L332 110V116.5z" fill="#B0B0B0"/>
<path d="M298.5 93.5H328.5V106.5L317.5 116.5H298.5Z" fill="#fff" stroke="#6D6D6D" stroke-width="1"/>
<path d="M300 95H327V102.5c-2-1.5-4-1-5 0c-1.5-2-4-2.5-6-1c-1.5-2.5-4.5-3-6.5-1c-1.5-2-5-2-6.5 0.5c-1-0.5-2-0.5-3 0z" fill="#4A7EBB"/>
<path d="M300.3 110.5c3-3 6-4.5 9-4.7c3 0 6 1.5 8.2 4.7z" fill="#73A790"/>
<rect x="300" y="112.3" width="17.5" height="2.4" fill="#4A7EBB"/>
<path d="M317.5 116.5l2.5-8 8.5-1.5z" fill="#fff" stroke="#6D6D6D" stroke-width="1" stroke-linejoin="round"/>
<path d="M336.5 160h7l-3.5 3.5z" fill="#555"/>
<circle cx="399.3" cy="99.8" r="11" fill="#fff" stroke="#4A7EBB" stroke-width="1"/>
<rect x="373.5" y="95.5" width="20" height="20" fill="#fff" stroke="#4A7EBB" stroke-width="1"/>
<path d="M391 104.5l10.5 10.5-10.5 10.5-10.5-10.5z" fill="#fff" stroke="#4A7EBB" stroke-width="1"/>
<path d="M387.5 160h7l-3.5 3.5z" fill="#555"/>
<circle cx="449" cy="94.5" r="6.8" fill="#4A7EBB"/>
<path d="M454 92.5h7.5l-3 4h-6z" fill="#4A7EBB"/>
<path d="M427 99c3 3 8 4 12 2.5l9-1 5 6-10 11c-9 2-17-6-16-18.5z" fill="#4A7EBB"/>
<path d="M436 126c3-7 7-10 11-12M438 119c0-8 7-13 20-14c1 12-5 18-13 18c-3 0-5-1-7-4z" fill="#F3F3F3" stroke="#777" stroke-width="1.2"/>
<path d="M501.5 91.5l15 8.7v17.4l-15 8.7-15-8.7v-17.4z" fill="#F8F8F8" stroke="#1E6FC8" stroke-width="1.4"/>
<path d="M486.5 100.2l10 5.5M516.5 100.2l-15 8.7v17.4" fill="none" stroke="#1E6FC8" stroke-width="1.4"/>
<path d="M524.5 159.5h7l-3.5 3.5z" fill="#555"/>
<path d="M547.5 94h22l11 10.5v1l-11 10.5h-22l10.5-11z" fill="#73A790"/>
<rect x="559.5" y="105.5" width="24" height="16" fill="#fff" stroke="#6D6D6D" stroke-width="1"/>
<path d="M564 110.5h1.5M567.5 110.5h11M564 113.5h1.5M567.5 113.5h11M564 116.5h1.5M567.5 116.5h11" stroke="#8A8A8A" stroke-width="0.9"/>
<rect x="608" y="102" width="9" height="23" fill="#4A7EBB"/>
<rect x="619.5" y="92" width="9" height="33" fill="#EBC477"/>
<rect x="630" y="99" width="9" height="26" fill="#7F7F7F"/>
<path d="M675.5 102.5h7v14h-7zM675.5 109.5h14v7h-14zM682.5 109.5v7" fill="none" stroke="#D24726" stroke-width="1.2"/>
<path d="M685 102.4h9M689.4 98v8.7" stroke="#D24726" stroke-width="1.2"/>
<path d="M685.7 138l6.3 3.3v8.7l-6.3 3.4-6.3-3.4v-8.7z" fill="#0A6ECC"/>
<path d="M679.4 147.8l3.5 1.9v4l-3.5 1.9-3.5-1.9v-4z" fill="#0A6ECC"/>
<path d="M786.8 146h6.2l-3.1 3.3z" fill="#555"/>
<rect x="827.5" y="94.5" width="35" height="26" fill="#fff" stroke="#6D6D6D" stroke-width="1"/>
<rect x="843.5" y="99.5" width="21" height="16" rx="1.2" fill="#fff" stroke="#4A7EBB" stroke-width="1.1"/>
<rect x="847" y="102" width="14.5" height="3" fill="#C8C8C8"/>
<path d="M838.5 105.5l5 -3v10l-5 -3z" fill="#fff" stroke="#4A7EBB" stroke-width="1"/>
<rect x="830.5" y="105.5" width="8" height="5" fill="#BCD3EA" stroke="#4A7EBB" stroke-width="0.6"/>
<path d="M840.5 160h7l-3.5 3.5z" fill="#555"/>
<g fill="none" stroke="#808080" stroke-width="1"><circle cx="895.6" cy="106" r="16" fill="#fff"/><ellipse cx="895.6" cy="106" rx="7" ry="16"/><path d="M879.6 106h32M882 97c8 3 19 3 27 0M882 115c8-3 19-3 27 0"/></g>
<g fill="none" stroke="#4A7EBB" stroke-width="3.2"><rect x="893.5" y="118" width="13" height="8.5" rx="4.2"/><rect x="903.5" y="118" width="13" height="8.5" rx="4.2"/></g>
<path d="M897 122.3h5M908 122.3h5" stroke="#fff" stroke-width="1.5"/>
<path d="M901.5 122.3l4 3M905 119l4 3.3" stroke="#4A7EBB" stroke-width="2.5"/>
<rect x="932.5" y="93.5" width="30" height="27" fill="#fff" stroke="#888" stroke-width="0.9" stroke-dasharray="2 1.2"/>
<g fill="#666"><rect x="931" y="92" width="3" height="3"/><rect x="961" y="92" width="3" height="3"/><rect x="931" y="119" width="3" height="3"/><rect x="961" y="119" width="3" height="3"/></g>
<polygon points="947.50,96.50 949.97,103.10 957.01,103.41 951.49,107.80 953.38,114.59 947.50,110.70 941.62,114.59 943.51,107.80 937.99,103.41 945.03,103.10" fill="#4A7EBB"/>
<path d="M1014.5 93.5h31a2 2 0 0 1 2 2v19.5a2 2 0 0 1-2 2h-20l-6 7v-7h-5a2 2 0 0 1-2-2v-19.5a2 2 0 0 1 2-2z" fill="#fff" stroke="#6D6D6D" stroke-width="1.1"/>
<path d="M1010 96.5h17M1018.5 88v17" stroke="#5E9E7E" stroke-width="4.2"/>
<rect x="1093.5" y="92.5" width="35" height="30" fill="#fff" stroke="#6D6D6D" stroke-width="1"/>
<path d="M1097 106l3.5-10h1.5l3.5 10M1098.5 102h6" fill="none" stroke="#4A7EBB" stroke-width="1.6"/>
<path d="M1109 97h16M1109 100h16M1109 103h16M1109 106h16M1097 110h28M1097 113h28M1097 116h28M1097 119h28" stroke="#999" stroke-width="0.9"/>
<path d="M1156.5 91.5h18l6 6v27h-24z" fill="#fff" stroke="#6D6D6D" stroke-width="1"/>
<path d="M1174.5 91.5v6h6" fill="none" stroke="#6D6D6D" stroke-width="1"/>
<rect x="1159" y="95" width="11" height="5" fill="#EBC477"/><rect x="1159" y="116" width="19" height="5.5" fill="#EBC477"/>
<path d="M1217.6 114.2L1238.8 93.2M1238.8 93.5L1236.6 123M1224 109l12.5 6" fill="none" stroke="#4A7EBB" stroke-width="4.6"/>
<path d="M1226.5 160h7l-3.5 3.5z" fill="#555"/>
<rect x="1272.5" y="93.5" width="30" height="28" fill="#fff" stroke="#888" stroke-width="1"/>
<rect x="1272" y="93" width="31" height="3.5" fill="#777"/>
<path d="M1279.5 96v25M1287 96v25M1294.5 96v25M1272.5 102.5h30M1272.5 109h30M1272.5 115.5h30" stroke="#B5B5B5" stroke-width="0.9"/>
<rect x="1279" y="103" width="7" height="6" fill="#fff" stroke="#E07B39" stroke-width="1.2"/>
<circle cx="1298.5" cy="118" r="9" fill="#fff" stroke="#4A7EBB" stroke-width="1.3"/>
<path d="M1298 112v6.5h5" fill="none" stroke="#555" stroke-width="1"/>
<rect x="1326.5" y="94.5" width="34.5" height="27" rx="1.5" fill="#fff" stroke="#6D6D6D" stroke-width="1"/>
<path d="M1331 98h1.5M1334 98h22M1331 101h1.5M1334 101h22" stroke="#999" stroke-width="0.8"/>
<path d="M1341.5 106l-2 11M1346.5 106l-2 11M1338 109.5h10M1337 113.5h10" stroke="#4A7EBB" stroke-width="1.5"/>
<path d="M1392.5 91.5h17l7 7v26h-24z" fill="#fff" stroke="#6D6D6D" stroke-width="1"/>
<path d="M1409.5 91.5v7h7" fill="none" stroke="#6D6D6D" stroke-width="1"/>
<rect x="1382.5" y="102.5" width="18" height="15" fill="#fff" stroke="#4A7EBB" stroke-width="1.2"/><rect x="1382" y="102" width="19" height="3" fill="#4A7EBB"/>
<path d="M1462 97c2-4 5-5 9-5h20.5v5h-5c-1 7 -1 16 1 21c1 3 -4 6 -6 3c-2-4-1-15 0-24h-6c-1 10-3 20-7 26c-2 2-5 0-4-2c3-6 5-15 6-24h-2c-2 0-4 1-5.5 3z" fill="#4A7EBB"/>
<path d="M1473.5 160h7l-3.5 3.5z" fill="#555"/>
<text x="1535.5" y="122.5" text-anchor="middle" font-family="Liberation Serif" font-weight="bold" font-size="45px" fill="#4A7EBB">&#937;</text>
<rect x="1596.5" y="93.5" width="29" height="29" fill="#fff" stroke="#666" stroke-width="1"/>
<rect x="1596" y="93" width="30" height="5" fill="#666"/><rect x="1596" y="118" width="30" height="5" fill="#666"/>
<g fill="#fff"><rect x="1598.0" y="94.5" width="2.2" height="2"/><rect x="1598.0" y="119.5" width="2.2" height="2"/><rect x="1602.3" y="94.5" width="2.2" height="2"/><rect x="1602.3" y="119.5" width="2.2" height="2"/><rect x="1606.6" y="94.5" width="2.2" height="2"/><rect x="1606.6" y="119.5" width="2.2" height="2"/><rect x="1610.9" y="94.5" width="2.2" height="2"/><rect x="1610.9" y="119.5" width="2.2" height="2"/><rect x="1615.2" y="94.5" width="2.2" height="2"/><rect x="1615.2" y="119.5" width="2.2" height="2"/><rect x="1619.5" y="94.5" width="2.2" height="2"/><rect x="1619.5" y="119.5" width="2.2" height="2"/></g>
<path d="M1606.5 160h7l-3.5 3.5z" fill="#555"/>
<path d="M1649 102.5h6l10-10v32l-10-10h-6z" fill="#6D6D6D"/>
<path d="M1669 100a10 10 0 0 1 0 16M1673.5 96a15 15 0 0 1 0 24" fill="none" stroke="#4A7EBB" stroke-width="2"/>
<path d="M1658.5 160h7l-3.5 3.5z" fill="#555"/>
<rect x="1709.5" y="91" width="28.5" height="21" fill="#fff" stroke="#999" stroke-width="1" stroke-dasharray="2 1.5"/>
<rect x="1707" y="113" width="10" height="8" fill="#4A7EBB"/><rect x="1715" y="114" width="7" height="9" fill="#9A9A9A"/>
<path d="M1723 118l5-3v7z" fill="#666"/>
<path d="M1733 117h10M1738 112v10" stroke="#4A7EBB" stroke-width="2.4"/>
<path d="M1896.5 191l6.5-6.5 6.5 6.5" fill="none" stroke="#555" stroke-width="1.2"/></svg>
<div class="c tab" style="left:1561.5px;top:12px;color:#6E6E6E;font-size:12.5px">AS</div>
</div></body></html>
